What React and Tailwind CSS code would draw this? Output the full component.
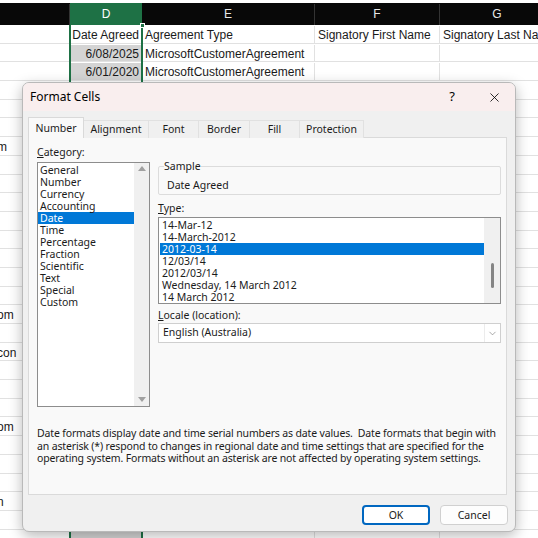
import React from 'react';
import { X, ChevronDown } from 'lucide-react';

const ROWS = [
  { d: '6/08/2025', e: 'MicrosoftCustomerAgreement' },
  { d: '6/01/2020', e: 'MicrosoftCustomerAgreement' },
];

// fragments of column C peeking out left of the dialog
const LEFT_BITS = { 6: 'm', 15: 'om', 17: 'con', 21: 'om', 25: 'n' };

const CATEGORIES = [
  'General', 'Number', 'Currency', 'Accounting', 'Date', 'Time',
  'Percentage', 'Fraction', 'Scientific', 'Text', 'Special', 'Custom',
];

const TYPES = [
  '14-Mar-12', '14-March-2012', '2012-03-14', '12/03/14',
  '2012/03/14', 'Wednesday, 14 March 2012', '14 March 2012',
];

const TABS = [
  { label: 'Number', w: 'w-[56px]' },
  { label: 'Alignment', w: 'w-[65px]' },
  { label: 'Font', w: 'w-[50px]' },
  { label: 'Border', w: 'w-[51px]' },
  { label: 'Fill', w: 'w-[50px]' },
  { label: 'Protection', w: 'w-[64px]' },
];

function Sheet() {
  const rows = [];
  for (let i = 0; i < 28; i++) {
    const data = i === 0 ? null : ROWS[i - 1];
    rows.push(
      <div key={i} className="flex h-[18.7px] border-b border-[#e1e1e1] leading-[18px] pt-[1px] whitespace-nowrap">
        <div className="w-[70px] shrink-0 border-r border-[#e1e1e1] overflow-hidden">
          {LEFT_BITS[i] && <span className="block -ml-[3px]">{LEFT_BITS[i]}</span>}
        </div>
        <div className={`w-[72px] shrink-0 text-right pr-[3px] overflow-hidden ${i === 0 ? 'bg-white' : 'bg-[#d4d4d4]'}`}>
          {i === 0 ? 'Date Agreed' : data ? data.d : ''}
        </div>
        <div className="w-[173px] shrink-0 border-r border-[#e1e1e1] pl-[3px]">
          {i === 0 ? 'Agreement Type' : data ? data.e : ''}
        </div>
        <div className="w-[125px] shrink-0 border-r border-[#e1e1e1] pl-[3px]">
          {i === 0 ? 'Signatory First Name' : ''}
        </div>
        <div className="w-[114px] shrink-0 pl-[3px]">
          {i === 0 ? 'Signatory Last Name' : ''}
        </div>
      </div>
    );
  }

  return (
    <div className="font-['Liberation_Sans',Arial,sans-serif] text-[12px] text-[#1a1a1a]">
      <div className="h-[3px] bg-white" />
      <div className="flex h-[22px] pt-[1px] bg-[#080808] text-[#e8e8e8] text-[12px] leading-[21px]">
        <div className="w-[70px] shrink-0 border-r border-[#333]" />
        <div className="w-[72px] shrink-0 -mt-[1px] bg-[#1e7145] text-center text-white leading-[23px]">D</div>
        <div className="w-[173px] shrink-0 border-r border-[#333] text-center">E</div>
        <div className="w-[125px] shrink-0 border-r border-[#333] text-center">F</div>
        <div className="w-[114px] shrink-0 text-center">G</div>
      </div>
      {rows}
    </div>
  );
}

function Label({ hot, rest }) {
  return (
    <div className="h-[12px] leading-[12px]">
      <span className="underline underline-offset-[1px]">{hot}</span>
      {rest}
    </div>
  );
}

function FormatCells() {
  return (
    <div className="absolute left-[22px] top-[82px] w-[494px] h-[450px] rounded-[7px] border border-[#b9b9b9] bg-[#f0f0f0] shadow-[0_4px_14px_rgba(0,0,0,0.28)] overflow-hidden flex flex-col font-['Noto_Sans',sans-serif] text-[10.5px] text-[#1b1b1b]">
      {/* title bar */}
      <div className="h-[28px] shrink-0 bg-[#f9eeee] flex items-center pl-[7px] pr-[13px] text-[12px] text-black">
        <span className="flex-1">Format Cells</span>
        <span className="w-[14px] text-center text-[13px] mr-[28px]">?</span>
        <X size={15} strokeWidth={1.3} />
      </div>

      <div className="pl-[5px] pt-[6px] flex flex-col">
        {/* tabs */}
        <div className="flex items-end h-[21px] -mb-px relative z-10">
          {TABS.map((t, i) =>
            i === 0 ? (
              <div key={t.label} className={`${t.w} h-[21px] pt-[2px] bg-[#f9f9f9] border border-b-0 border-[#d9d9d9] flex items-center justify-center`}>
                {t.label}
              </div>
            ) : (
              <div key={t.label} className={`${t.w} h-[18px] pt-[1px] bg-[#f0f0f0] border border-l-0 border-b-0 border-[#e1e1e1] flex items-center justify-center`}>
                {t.label}
              </div>
            )
          )}
        </div>

        {/* tab panel */}
        <div className="w-[479px] h-[358px] bg-[#f9f9f9] border border-[#dadada] pl-[8px] flex flex-col">
          <div className="flex">
            <div className="w-[113px] pt-[8px] flex flex-col">
              <Label hot="C" rest="ategory:" />
              <div className="mt-[4px] h-[245px] bg-white border border-[#8d8d8d] flex">
                <div className="flex-1 pt-[1px]">
                  {CATEGORIES.map((c) => (
                    <div key={c} className={`h-[12px] leading-[12px] pl-[2px] ${c === 'Date' ? 'bg-[#0078d7] text-white' : ''}`}>
                      {c}
                    </div>
                  ))}
                </div>
                <div className="w-[15px] bg-[#f0f0f0] flex flex-col items-center justify-between pt-[3px] pb-[4px]">
                  <div className="w-0 h-0 border-l-[4px] border-r-[4px] border-b-[5px] border-l-transparent border-r-transparent border-b-[#a0a0a0]" />
                  <div className="w-0 h-0 border-l-[4px] border-r-[4px] border-t-[5px] border-l-transparent border-r-transparent border-t-[#a0a0a0]" />
                </div>
              </div>
            </div>

            <div className="w-[343px] ml-[8px] pt-[22px] flex flex-col">
              <fieldset className="h-[35px] border border-[#dcdcdc] rounded-[2px] px-[5px] m-0">
                <legend className="px-0 leading-[12px]">Sample</legend>
                <div className="pl-[3px] pt-[7px] leading-[12px]">Date Agreed</div>
              </fieldset>
              <div className="mt-[7px]">
                <Label hot="T" rest="ype:" />
              </div>
              <div className="mt-[3px] h-[87px] bg-white border border-[#8d8d8d] flex">
                <div className="flex-1 pt-[1px] pl-[1px]">
                  {TYPES.map((t) => (
                    <div key={t} className={`h-[12px] leading-[12px] pl-[2px] ${t === '2012-03-14' ? 'bg-[#0078d7] text-white' : ''}`}>
                      {t}
                    </div>
                  ))}
                </div>
                <div className="w-[16px] bg-[#f0f0f0] pt-[45px] flex justify-center">
                  <div className="w-[3px] h-[25px] rounded-full bg-[#858585]" />
                </div>
              </div>
              <div className="mt-[5px]">
                <Label hot="L" rest="ocale (location):" />
              </div>
              <div className="mt-[2px] h-[20px] bg-white border border-[#cfcfcf] flex items-center">
                <span className="flex-1 pl-[4px]">English (Australia)</span>
                <div className="w-[16px] h-full border-l border-[#ececec] flex items-center justify-center text-[#7a7a7a]">
                  <ChevronDown size={11} strokeWidth={1.4} />
                </div>
              </div>
            </div>
          </div>

          <p className="mt-[20px] w-[466px] leading-[12.5px] tracking-[-0.15px]">
            Date formats display date and time serial numbers as date values.&nbsp; Date formats that begin with
            an asterisk (*) respond to changes in regional date and time settings that are specified for the
            operating system. Formats without an asterisk are not affected by operating system settings.
          </p>
        </div>
      </div>

      {/* buttons */}
      <div className="mt-[10px] pr-[7px] flex justify-end gap-[10px]">
        <button className="w-[68px] h-[20px] rounded-[4px] bg-white border-2 border-[#0067c0] leading-none">OK</button>
        <button className="w-[68px] h-[20px] rounded-[4px] bg-[#fdfdfd] border border-[#d0d0d0] leading-none">Cancel</button>
      </div>
    </div>
  );
}

export default function App() {
  return (
    <div className="relative w-[538px] h-[538px] overflow-hidden bg-white">
      <Sheet />
      {/* column D selection outline */}
      <div className="absolute left-[69px] top-[25px] w-[74px] h-[513px] border-x-2 border-[#1e7145] pointer-events-none" />
      <div className="absolute left-[140px] top-[23px] w-[5px] h-[5px] bg-[#1e7145] border border-white" />
      <FormatCells />
    </div>
  );
}
